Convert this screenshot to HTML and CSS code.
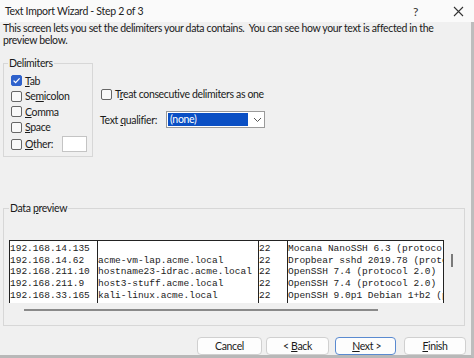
FILE: index.html
```html
<!DOCTYPE html>
<html>
<head>
<meta charset="utf-8">
<link rel="stylesheet" href="styles.css">
</head>
<body>
<div class="window">
  <div class="titlebar">
    <span class="title">Text Import Wizard - Step 2 of 3</span>
    <span class="help">?</span>
    <span class="close"><svg width="11" height="11" viewBox="0 0 11 11"><path d="M1 1 L10 10 M10 1 L1 10" stroke="#333" stroke-width="1.1" fill="none"/></svg></span>
  </div>
  <div class="content">
    <p class="intro">This screen lets you set the delimiters your data contains.&nbsp; You can see how your text is affected in the<br>preview below.</p>
    <div class="upper">
      <fieldset class="group delims">
        <legend>Delimiters</legend>
        <div class="cbrow"><span class="cb checked"><svg width="9" height="9" viewBox="0 0 9 9"><path d="M1.6 4.6 L3.6 6.6 L7.6 2.4" stroke="#fff" stroke-width="1.3" fill="none"/></svg></span><span><u>T</u>ab</span></div>
        <div class="cbrow"><span class="cb"></span><span>Se<u>m</u>icolon</span></div>
        <div class="cbrow"><span class="cb"></span><span><u>C</u>omma</span></div>
        <div class="cbrow"><span class="cb"></span><span><u>S</u>pace</span></div>
        <div class="cbrow other"><span class="cb"></span><span class="otherlabel"><u>O</u>ther:</span><span class="otherbox"></span></div>
      </fieldset>
      <div class="options">
        <div class="cbrow treat"><span class="cb"></span><span>T<u>r</u>eat consecutive delimiters as one</span></div>
        <div class="qualrow">
          <span class="quallabel">Text <u>q</u>ualifier:</span>
          <span class="combo"><span class="sel">(none)</span><svg class="chev" width="9" height="6" viewBox="0 0 9 6"><path d="M1 1 L4.5 4.5 L8 1" stroke="#555" stroke-width="1" fill="none"/></svg></span>
        </div>
      </div>
    </div>
    <fieldset class="group preview">
      <legend>Data <u>p</u>review</legend>
      <div class="prevrow">
        <div class="grid">
          <div class="col c1"><div>192.168.14.135</div><div>192.168.14.62</div><div>192.168.211.10</div><div>192.168.211.9</div><div>192.168.33.165</div></div>
          <div class="col c2"><div>&nbsp;</div><div>acme-vm-lap.acme.local</div><div>hostname23-idrac.acme.local</div><div>host3-stuff.acme.local</div><div>kali-linux.acme.local</div></div>
          <div class="col c3"><div>22</div><div>22</div><div>22</div><div>22</div><div>22</div></div>
          <div class="col c4"><div>Mocana NanoSSH 6.3 (protocol 2.0)</div><div>Dropbear sshd 2019.78 (protocol 2.0)</div><div>OpenSSH 7.4 (protocol 2.0)</div><div>OpenSSH 7.4 (protocol 2.0)</div><div>OpenSSH 9.0p1 Debian 1+b2 (protocol 2.0)</div></div>
        </div>
        <div class="vscroll"><span class="vthumb"></span></div>
      </div>
      <div class="hscroll"><span class="hthumb"></span></div>
    </fieldset>
    <div class="buttons">
      <button class="btn cancel">Cancel</button>
      <button class="btn back">&lt; <u>B</u>ack</button>
      <button class="btn next">&nbsp;<u>N</u>ext &gt;</button>
      <button class="btn finish"><u>F</u>inish</button>
    </div>
  </div>
</div>
</body>
</html>
```
FILE: styles.css
```css
* { box-sizing: border-box; }
html, body { margin: 0; padding: 0; }
body {
  font-family: Lato, "Noto Sans", sans-serif;
  font-size: 10.5px;
  letter-spacing: -0.35px;
  color: #1a1a1a;
  background: #f0f0f0;
}
.window {
  width: 474px;
  height: 358px;
  display: flex;
  flex-direction: column;
  overflow: hidden;
}
.titlebar {
  height: 22px;
  flex: none;
  display: flex;
  align-items: center;
  padding-left: 5px;
  background: #fafafa;
}
.title { font-size: 10.5px; letter-spacing: -0.3px; color: #222; flex: 1; }
.help { width: 40px; font-size: 12px; color: #333; letter-spacing: 0; }
.close { width: 21px; display: flex; align-items: center; }
.content {
  flex: 1;
  background: #f0f0f0;
  border-right: 3px solid #bdbdbd;
  border-bottom: 4px solid #b8b8b8;
  padding-left: 3px;
  display: flex;
  flex-direction: column;
}
.intro {
  margin: 0;
  line-height: 12px;
  white-space: nowrap;
}
.upper {
  display: flex;
  align-items: flex-start;
  margin-top: 11px;
}
.group {
  margin: 0;
  border: 1px solid #d7d7d7;
  min-width: 0;
}
.group legend {
  padding: 0 1px;
  line-height: 12px;
}
.delims {
  width: 90px;
  padding: 4px 0 3px 4px;
}
.cbrow {
  display: flex;
  align-items: center;
  height: 15.5px;
  margin-left: 3px;
  gap: 3px;
  white-space: nowrap;
}
.cb {
  width: 11px;
  height: 11px;
  flex: none;
  border: 1px solid #666;
  border-radius: 2px;
  background: #f9f9f9;
  display: flex;
  align-items: center;
  justify-content: center;
}
.cb.checked {
  background: #2f62cc;
  border-color: #2f62cc;
}
.other { height: 18px; }
.otherlabel { width: 34px; }
.otherbox {
  width: 25px;
  height: 16px;
  background: #fff;
  border: 1px solid #c4c4c4;
}
.options {
  margin-left: 5px;
  padding-top: 31px;
}
.treat { height: 12px; margin-left: 3px; }
.qualrow {
  display: flex;
  align-items: center;
  margin-top: 11px;
  margin-left: 2px;
}
.quallabel { width: 66px; white-space: nowrap; }
.combo {
  width: 99px;
  height: 17px;
  background: #fff;
  border: 1px solid #9a9a9a;
  display: flex;
  align-items: center;
  padding-left: 1px;
}
.sel {
  width: 80px;
  height: 13px;
  background: #0a4fc4;
  color: #fff;
  line-height: 13px;
  padding-left: 2px;
}
.chev { margin-left: 5px; }
.preview {
  width: 462px;
  margin-top: 45px;
  padding: 26px 0 8px 5px;
}
.prevrow { display: flex; }
.grid {
  width: 435px;
  height: 63px;
  background: #fff;
  border: 1px solid #222;
  border-bottom: none;
  display: flex;
  overflow: hidden;
  font-family: "Liberation Mono", "Courier New", monospace;
  font-size: 9.5px;
  letter-spacing: 0;
  line-height: 11.67px;
  color: #222;
}
.col { flex: none; white-space: nowrap; overflow: hidden; border-right: 1px solid #222; padding-top: 2px; }
.c1 { width: 88px; }
.c2 { width: 161px; }
.c3 { width: 29px; }
.c4 { flex: 1; border-right: none; }
.vscroll { width: 20px; }
.vthumb {
  display: block;
  width: 2px;
  height: 13px;
  background: #7a7a7a;
  margin: 14px 0 0 7px;
}
.hscroll { height: 8px; }
.hthumb {
  display: block;
  width: 354px;
  height: 2px;
  background: #8a8a8a;
  margin: 6px 0 0 15px;
}
.buttons {
  display: flex;
  justify-content: flex-end;
  margin-top: 11px;
  padding-right: 5px;
}
.btn {
  height: 18px;
  font-family: inherit;
  font-size: 10.5px;
  letter-spacing: -0.35px;
  color: #1a1a1a;
  background: #fdfdfd;
  border: 1px solid #d0d0d0;
  border-radius: 4px;
  padding: 0;
}
.cancel { width: 65px; }
.back { width: 63px; margin-left: 4px; }
.next { width: 61px; margin-left: 6px; border-color: #5a8ad0; }
.finish { width: 62px; margin-left: 8px; }
```
